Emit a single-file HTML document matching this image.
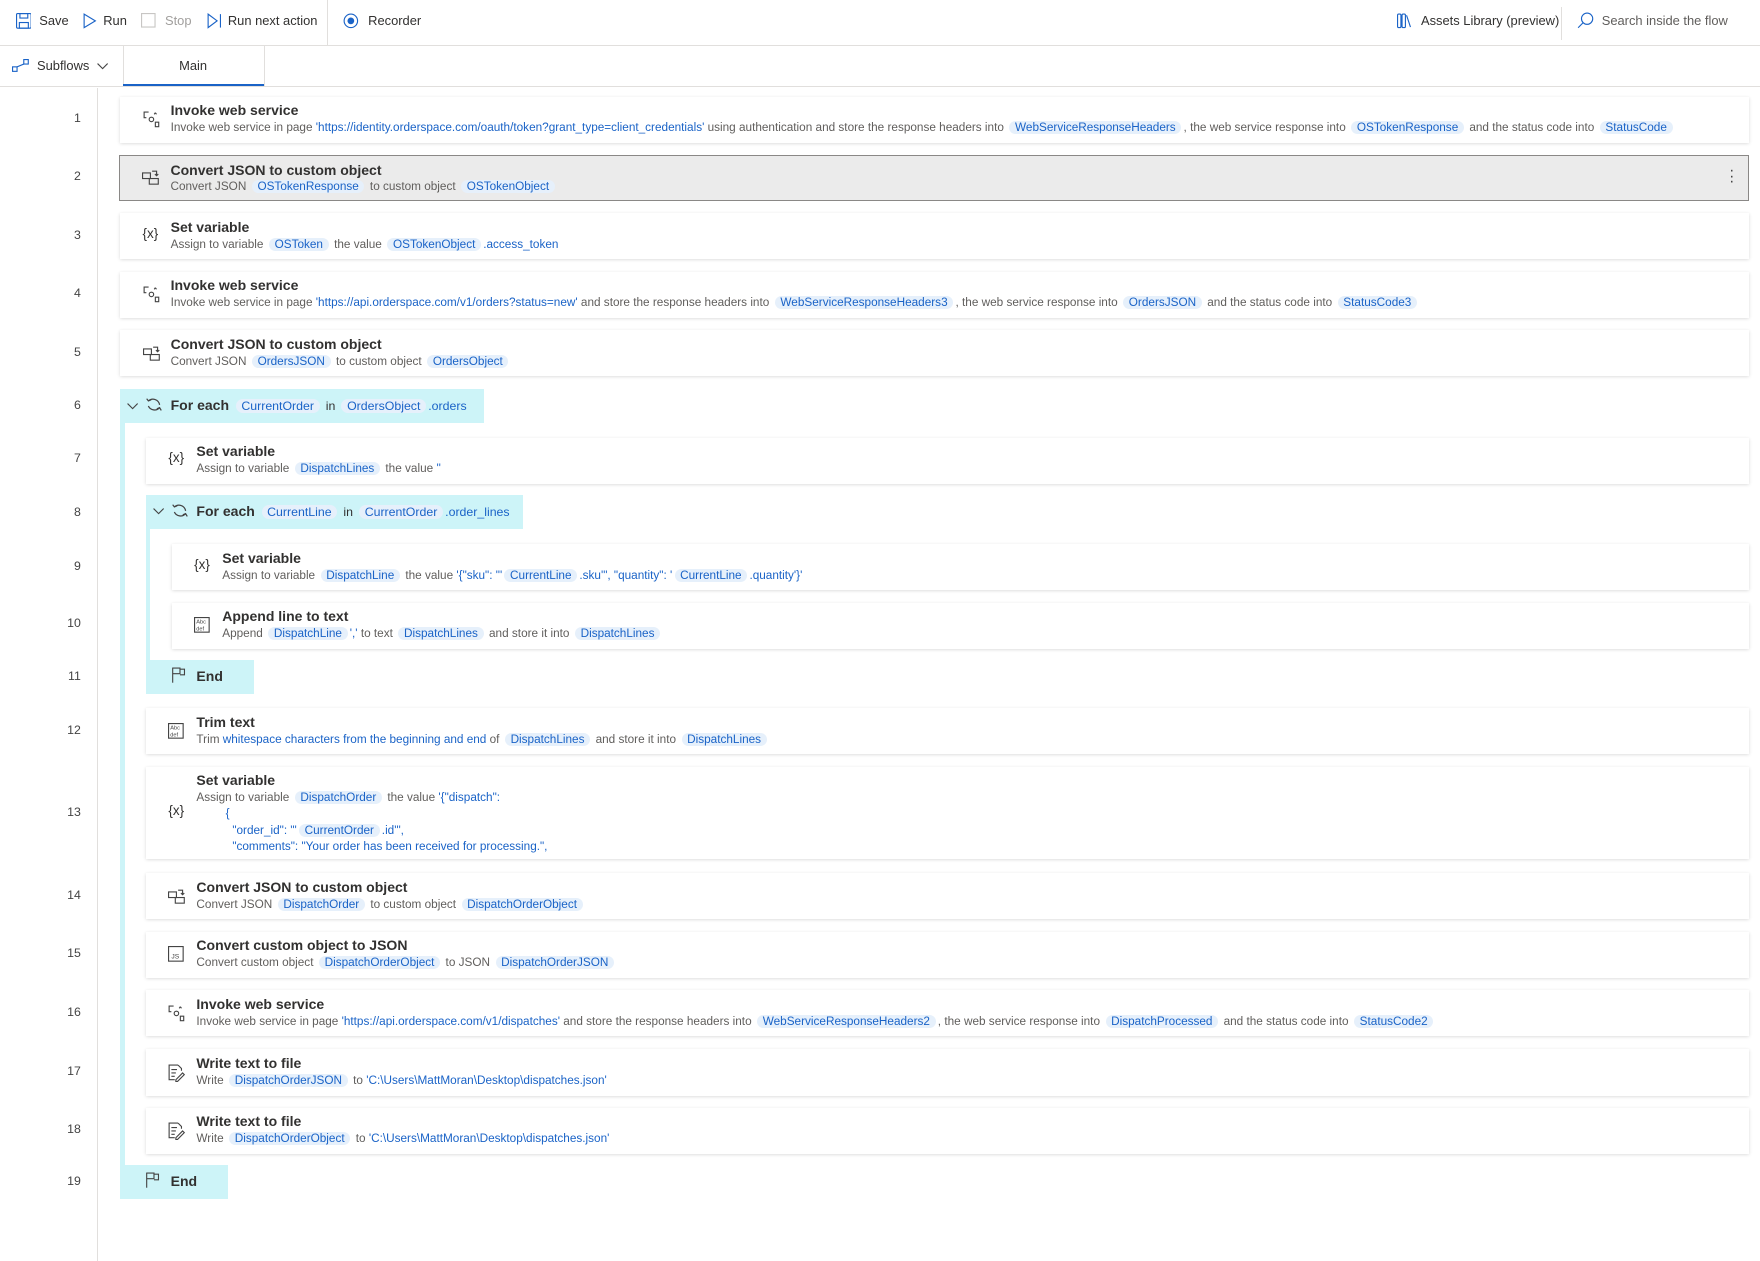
<!DOCTYPE html>
<html><head><meta charset="utf-8"><style>
html,body{margin:0;padding:0;background:#fff;overflow:hidden}
#w{width:1568px;height:1123px;position:relative;zoom:1.12245;font-family:"Liberation Sans",sans-serif;color:#323130}
.tb{position:absolute;left:0;top:0;width:1568px;height:40px;border-bottom:1px solid #e1dfdd}
.ti{position:absolute;top:12px;font-size:11.5px;color:#323130;line-height:14px}
.tabs{position:absolute;left:0;top:41px;width:1568px;height:36px;border-bottom:1px solid #e1dfdd}
.gut{position:absolute;left:86px;top:78px;width:1px;height:1045px;background:#e1dfdd}
.ln{position:absolute;width:72px;left:0;text-align:right;font-size:11px;color:#444;padding-right:0}
.card{position:absolute;right:10px;height:41px;background:#fff;box-shadow:0 1px 3px rgba(0,0,0,.16)}
.sel{background:#ebebeb;border:1px solid #8a8886;box-shadow:none}
.t{position:absolute;left:45px;top:5px;font-size:12.5px;font-weight:bold;color:#323130;white-space:nowrap}
.s{position:absolute;left:45px;top:21px;font-size:10.5px;color:#605e5c;white-space:nowrap;line-height:14px}
.c{background:#e6f0fb;color:#1a63c7;border-radius:7px;padding:0 5px;margin:0 2px}
.b{color:#1a63c7}
.ic{position:absolute;left:20px;top:13px}
.fe{position:absolute;height:30px;background:#cdf4f8}
.fe .ft{position:absolute;left:45px;top:7px;font-size:12.5px;white-space:nowrap;color:#323130}
.fe .ft b{margin-right:4px}
.fe .c{background:#e6f0fb;font-weight:normal;font-size:11px}
.bar{position:absolute;width:4px;background:#cdf4f8}
</style></head><body><div id="w">

<div class="tb">
<svg style="position:absolute;left:14px;top:12px" width="14" height="14" viewBox="0 0 14 14" fill="none" stroke="#1a63c7" stroke-width="1"><rect x="0.5" y="0.5" width="13" height="13" rx="1"/><rect x="3.5" y="0.5" width="7" height="4"/><rect x="3" y="8.5" width="8" height="5"/></svg>
<span class="ti" style="left:35px">Save</span>
<svg style="position:absolute;left:74px;top:12px" width="12" height="14" viewBox="0 0 12 14" fill="none" stroke="#1a63c7"><path d="M1 1 L11 7 L1 13 Z"/></svg>
<span class="ti" style="left:92px">Run</span>
<svg style="position:absolute;left:126px;top:12px" width="13" height="13" fill="none" stroke="#c8c6c4"><rect x="0.5" y="0.5" width="12" height="12"/></svg>
<span class="ti" style="left:147px;color:#a19f9d">Stop</span>
<svg style="position:absolute;left:184px;top:12px" width="13" height="14" viewBox="0 0 13 14" fill="none" stroke="#1a63c7"><path d="M1 1 L9 7 L1 13 Z"/><path d="M12 1 V13"/></svg>
<span class="ti" style="left:203px">Run next action</span>
<div style="position:absolute;left:291px;top:0;width:1px;height:40px;background:#e1dfdd"></div>
<svg style="position:absolute;left:306px;top:12px" width="14" height="14" fill="none"><circle cx="7" cy="7" r="6" stroke="#1a63c7"/><circle cx="7" cy="7" r="3" fill="#1a63c7"/></svg>
<span class="ti" style="left:328px">Recorder</span>
<svg style="position:absolute;left:1245px;top:12px" width="13" height="14" fill="none" stroke="#1a63c7"><rect x="0.5" y="1" width="3" height="12" rx="1"/><rect x="4.5" y="1" width="3" height="12" rx="1"/><path d="M8.5 2 L12 12.5"/></svg>
<span class="ti" style="left:1266px">Assets Library (preview)</span>
<div style="position:absolute;left:1391px;top:6px;width:1px;height:30px;background:#e1dfdd"></div>
<svg style="position:absolute;left:1405px;top:11px" width="15" height="15" fill="none" stroke="#1a63c7"><circle cx="9" cy="6" r="5"/><path d="M5.5 9.5 L1 14"/></svg>
<span class="ti" style="left:1427px;color:#605e5c">Search inside the flow</span>
</div>

<div class="tabs">
<svg style="position:absolute;left:11px;top:12px" width="15" height="12" fill="none" stroke="#1a63c7"><rect x="0.5" y="7" width="4" height="4"/><rect x="10.5" y="0.5" width="4" height="4"/><path d="M4.5 7 L10.5 4.5"/></svg>
<span class="ti" style="left:33px;top:11px">Subflows</span>
<svg style="position:absolute;left:86px;top:15px" width="10" height="6" fill="none" stroke="#444"><path d="M0.5 0.5 L5 5 L9.5 0.5"/></svg>
<div style="position:absolute;left:110px;top:0;width:124px;height:36px;border-left:1px solid #e1dfdd;border-right:1px solid #e1dfdd"></div>
<span class="ti" style="left:110px;width:124px;text-align:center;top:11px">Main</span>
<div style="position:absolute;left:110px;top:34px;width:125px;height:2px;background:#1a63c7"></div>
</div>
<div class="gut"></div>

<div class="ln" style="top:99px">1</div>
<div class="ln" style="top:151px">2</div>
<div class="ln" style="top:203px">3</div>
<div class="ln" style="top:255px">4</div>
<div class="ln" style="top:307px">5</div>
<div class="ln" style="top:355px">6</div>
<div class="ln" style="top:402px">7</div>
<div class="ln" style="top:450px">8</div>
<div class="ln" style="top:498px">9</div>
<div class="ln" style="top:549px">10</div>
<div class="ln" style="top:596px">11</div>
<div class="ln" style="top:644px">12</div>
<div class="ln" style="top:717px">13</div>
<div class="ln" style="top:791px">14</div>
<div class="ln" style="top:843px">15</div>
<div class="ln" style="top:895px">16</div>
<div class="ln" style="top:948px">17</div>
<div class="ln" style="top:1000px">18</div>
<div class="ln" style="top:1046px">19</div>

<!-- icons as symbols -->
<svg width="0" height="0" style="position:absolute"><defs>
<g id="iw" fill="none" stroke="#444" stroke-width="1"><path d="M5 1 H1 V6 H3"/><circle cx="7.5" cy="7.5" r="2"/><path d="M10 3 L11 1.5 M11 1.5 L12 3"/><path d="M11 14 V10 H14 V14 Z"/></g>
<g id="cj" fill="none" stroke="#444" stroke-width="1"><rect x="0.5" y="3.5" width="7" height="5"/><rect x="6.5" y="8.5" width="8" height="5"/><path d="M9 2 H13 V6 M11.5 4.5 L13 6 L14.5 4.5"/></g>
<g id="fl" fill="none" stroke="#444" stroke-width="1"><path d="M1.5 0.5 V14"/><path d="M1.5 1 H8 V6 H1.5"/><path d="M8 2 H12 V7 H8"/></g>
<g id="lp" fill="none" stroke="#444" stroke-width="1.1"><path d="M3 3.5 A6 6 0 0 1 13 7"/><path d="M13 9.5 A6 6 0 0 1 3 8"/><path d="M1.5 1.5 L3 3.5 L5.5 2.5"/><path d="M14.5 12 L13 9.5 L10.5 10.5"/></g>
<g id="ab" fill="none" stroke="#444" stroke-width="1"><rect x="0.5" y="0.5" width="13" height="13"/></g>
<g id="wr" fill="none" stroke="#444" stroke-width="1"><path d="M9 1 H1 V14 H6"/><path d="M9 1 L12 4 V6"/><path d="M3 5 H8 M3 8 H7 M3 11 H6"/><path d="M7 14 L13 8 L14.5 9.5 L8.5 15.5 H7 Z"/></g>
</defs></svg>

<!-- 1 -->
<div class="card" style="top:86px;left:107px"><svg class="ic" width="16" height="16"><use href="#iw"/></svg>
<div class="t">Invoke web service</div>
<div class="s">Invoke web service in page <span class="b">'https://identity.orderspace.com/oauth/token?grant_type=client_credentials'</span> using authentication and store the response headers into <span class="c">WebServiceResponseHeaders</span>, the web service response into <span class="c">OSTokenResponse</span> and the status code into <span class="c">StatusCode</span></div></div>
<!-- 2 -->
<div class="card sel" style="top:138px;left:106px;height:39px"><svg class="ic" width="16" height="16" style="top:12px"><use href="#cj"/></svg>
<div class="t">Convert JSON to custom object</div>
<div class="s">Convert JSON <span class="c">OSTokenResponse</span> to custom object <span class="c">OSTokenObject</span></div>
<div style="position:absolute;right:12px;top:11px;font-size:14px;color:#444;line-height:5px">·<br>·<br>·</div></div>
<!-- 3 -->
<div class="card" style="top:190px;left:107px"><div class="ic" style="font-size:12px;top:11px">{x}</div>
<div class="t">Set variable</div>
<div class="s">Assign to variable <span class="c">OSToken</span> the value <span class="c">OSTokenObject</span><span class="b">.access_token</span></div></div>
<!-- 4 -->
<div class="card" style="top:242px;left:107px"><svg class="ic" width="16" height="16"><use href="#iw"/></svg>
<div class="t">Invoke web service</div>
<div class="s">Invoke web service in page <span class="b">'https://api.orderspace.com/v1/orders?status=new'</span> and store the response headers into <span class="c">WebServiceResponseHeaders3</span>, the web service response into <span class="c">OrdersJSON</span> and the status code into <span class="c">StatusCode3</span></div></div>
<!-- 5 -->
<div class="card" style="top:294px;left:107px"><svg class="ic" width="16" height="16"><use href="#cj"/></svg>
<div class="t">Convert JSON to custom object</div>
<div class="s">Convert JSON <span class="c">OrdersJSON</span> to custom object <span class="c">OrdersObject</span></div></div>

<!-- 6 foreach -->
<div class="fe" style="top:347px;left:107px;width:324px">
<svg style="position:absolute;left:6px;top:12px" width="10" height="6" fill="none" stroke="#444"><path d="M0.5 0.5 L5 5 L9.5 0.5"/></svg>
<svg style="position:absolute;left:22px;top:7px" width="16" height="16"><use href="#lp"/></svg>
<div class="ft"><b>For each</b><span class="c">CurrentOrder</span> <span style="font-size:11px">in</span> <span class="c">OrdersObject</span><span class="b" style="font-size:11px">.orders</span></div></div>
<div class="bar" style="left:107px;top:377px;height:661px"></div>

<!-- 7 -->
<div class="card" style="top:390px;left:130px"><div class="ic" style="font-size:12px;top:11px">{x}</div>
<div class="t">Set variable</div>
<div class="s">Assign to variable <span class="c">DispatchLines</span> the value <span class="b">''</span></div></div>

<!-- 8 foreach -->
<div class="fe" style="top:441px;left:130px;width:336px">
<svg style="position:absolute;left:6px;top:12px" width="10" height="6" fill="none" stroke="#444"><path d="M0.5 0.5 L5 5 L9.5 0.5"/></svg>
<svg style="position:absolute;left:22px;top:7px" width="16" height="16"><use href="#lp"/></svg>
<div class="ft"><b>For each</b><span class="c">CurrentLine</span> <span style="font-size:11px">in</span> <span class="c">CurrentOrder</span><span class="b" style="font-size:11px">.order_lines</span></div></div>
<div class="bar" style="left:130px;top:470px;height:118px"></div>

<!-- 9 -->
<div class="card" style="top:485px;left:153px"><div class="ic" style="font-size:12px;top:11px">{x}</div>
<div class="t">Set variable</div>
<div class="s">Assign to variable <span class="c">DispatchLine</span> the value <span class="b">'{"sku": "'</span><span class="c">CurrentLine</span><span class="b">.sku'", "quantity": '</span><span class="c">CurrentLine</span><span class="b">.quantity'}'</span></div></div>
<!-- 10 -->
<div class="card" style="top:537px;left:153px"><svg class="ic" width="14" height="14"><use href="#ab"/><text x="2" y="6" font-size="5" fill="#444" font-family="Liberation Sans">Abc</text><text x="2" y="12" font-size="5" fill="#444" font-family="Liberation Sans">def</text></svg>
<div class="t">Append line to text</div>
<div class="s">Append <span class="c">DispatchLine</span><span class="b">','</span> to text <span class="c">DispatchLines</span> and store it into <span class="c">DispatchLines</span></div></div>

<!-- 11 end -->
<div class="fe" style="top:588px;left:130px;width:96px"><svg style="position:absolute;left:22px;top:6px" width="15" height="16"><use href="#fl"/></svg><div class="ft" style="font-weight:bold">End</div></div>

<!-- 12 -->
<div class="card" style="top:631px;left:130px"><svg class="ic" width="14" height="14"><use href="#ab"/><text x="2" y="6" font-size="5" fill="#444" font-family="Liberation Sans">Abc</text><text x="2" y="12" font-size="5" fill="#444" font-family="Liberation Sans">def</text></svg>
<div class="t">Trim text</div>
<div class="s">Trim <span class="b">whitespace characters from the beginning and end</span> of <span class="c">DispatchLines</span> and store it into <span class="c">DispatchLines</span></div></div>

<!-- 13 -->
<div class="card" style="top:683px;left:130px;height:82px"><div class="ic" style="font-size:12px;top:32px">{x}</div>
<div class="t">Set variable</div>
<div class="s" style="line-height:14.5px">Assign to variable <span class="c">DispatchOrder</span> the value <span class="b">'{"dispatch":</span><br>
<span class="b" style="padding-left:26px">{</span><br>
<span class="b" style="padding-left:32px">"order_id": "'</span><span class="c">CurrentOrder</span><span class="b">.id'",</span><br>
<span class="b" style="padding-left:32px">"comments": "Your order has been received for processing.",</span></div></div>

<!-- 14 -->
<div class="card" style="top:778px;left:130px"><svg class="ic" width="16" height="16"><use href="#cj"/></svg>
<div class="t">Convert JSON to custom object</div>
<div class="s">Convert JSON <span class="c">DispatchOrder</span> to custom object <span class="c">DispatchOrderObject</span></div></div>
<!-- 15 -->
<div class="card" style="top:830px;left:130px"><svg class="ic" width="14" height="14"><use href="#ab"/><text x="3" y="11" font-size="6" fill="#444" font-family="Liberation Sans">JS</text></svg>
<div class="t">Convert custom object to JSON</div>
<div class="s">Convert custom object <span class="c">DispatchOrderObject</span> to JSON <span class="c">DispatchOrderJSON</span></div></div>
<!-- 16 -->
<div class="card" style="top:882px;left:130px"><svg class="ic" width="16" height="16"><use href="#iw"/></svg>
<div class="t">Invoke web service</div>
<div class="s">Invoke web service in page <span class="b">'https://api.orderspace.com/v1/dispatches'</span> and store the response headers into <span class="c">WebServiceResponseHeaders2</span>, the web service response into <span class="c">DispatchProcessed</span> and the status code into <span class="c">StatusCode2</span></div></div>
<!-- 17 -->
<div class="card" style="top:935px;left:130px"><svg class="ic" width="16" height="16"><use href="#wr"/></svg>
<div class="t">Write text to file</div>
<div class="s">Write <span class="c">DispatchOrderJSON</span> to <span class="b">'C:\Users\MattMoran\Desktop\dispatches.json'</span></div></div>
<!-- 18 -->
<div class="card" style="top:987px;left:130px"><svg class="ic" width="16" height="16"><use href="#wr"/></svg>
<div class="t">Write text to file</div>
<div class="s">Write <span class="c">DispatchOrderObject</span> to <span class="b">'C:\Users\MattMoran\Desktop\dispatches.json'</span></div></div>

<!-- 19 end -->
<div class="fe" style="top:1038px;left:107px;width:96px"><svg style="position:absolute;left:22px;top:6px" width="15" height="16"><use href="#fl"/></svg><div class="ft" style="font-weight:bold">End</div></div>

</div></body></html>
